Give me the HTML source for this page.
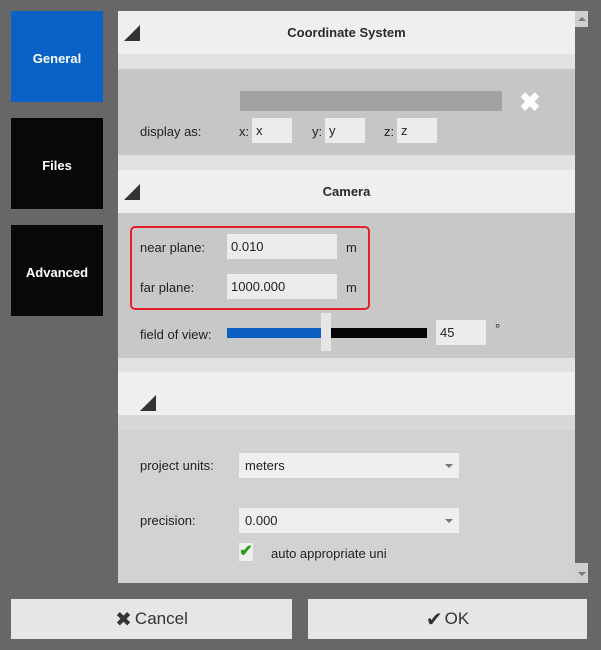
<!DOCTYPE html>
<html><head><meta charset="utf-8"><style>
*{margin:0;padding:0;box-sizing:border-box}
body{width:601px;height:650px;background:#676767;font-family:"Liberation Sans",sans-serif;position:relative;overflow:hidden;font-size:13px;color:#222}
.a{position:absolute}
.tab{position:absolute;left:11px;width:92px;height:91px;color:#fff;font-weight:bold;font-size:13px;display:flex;align-items:center;justify-content:center;background:#080808;padding-top:4px}
.hdr{position:absolute;left:118px;width:457px;height:43px;background:#efefef;font-weight:bold;font-size:13px;text-align:center;line-height:43px;color:#2a2a2a}
.tri{position:absolute;left:6px;top:14px;width:0;height:0;border-left:16px solid transparent;border-bottom:16px solid #333}
.strip{position:absolute;left:118px;width:457px;height:15px;background:#e2e2e2}
.body{position:absolute;left:118px;width:457px;background:#c6c6c6}
.in{position:absolute;background:#ececec;height:25px;line-height:25px;padding-left:4px;font-size:13px;color:#222}
.lbl{position:absolute;font-size:13px;color:#222}
.dd{position:absolute;background:#efefef;height:25px;line-height:26px;padding-left:6px;width:220px}
.dd:after{content:"";position:absolute;right:6px;top:11px;border-left:4px solid transparent;border-right:4px solid transparent;border-top:4px solid #777}
.btn{position:absolute;top:599px;height:40px;background:#e6e6e6;font-size:17px;color:#333;display:flex;align-items:center;justify-content:center}
</style></head><body>
<div class="tab" style="top:11px;background:#0a62c6">General</div>
<div class="tab" style="top:118px">Files</div>
<div class="tab" style="top:225px">Advanced</div>

<div class="a" style="left:575px;top:11px;width:13px;height:16px;background:#cfcfcf"></div>
<div class="a" style="left:578px;top:17px;border-left:4px solid transparent;border-right:4px solid transparent;border-bottom:4px solid #777"></div>
<div class="a" style="left:575px;top:563px;width:13px;height:20px;background:#cfcfcf"></div>
<div class="a" style="left:578px;top:572px;border-left:4px solid transparent;border-right:4px solid transparent;border-top:4px solid #777"></div>

<div class="hdr" style="top:11px"><div class="tri"></div>Coordinate System</div>
<div class="strip" style="top:54px"></div>
<div class="body" style="top:69px;height:86px"></div>
<div class="a" style="left:240px;top:91px;width:262px;height:20px;background:#a2a2a2"></div>
<div class="a" style="left:519px;top:90px;font-size:26px;color:#fff;font-weight:bold;line-height:24px">✖</div>
<div class="lbl" style="left:140px;top:124px">display as:</div>
<div class="lbl" style="left:239px;top:124px">x:</div><div class="in" style="left:252px;top:118px;width:40px">x</div>
<div class="lbl" style="left:312px;top:124px">y:</div><div class="in" style="left:325px;top:118px;width:40px">y</div>
<div class="lbl" style="left:384px;top:124px">z:</div><div class="in" style="left:397px;top:118px;width:40px">z</div>
<div class="strip" style="top:155px"></div>

<div class="hdr" style="top:170px"><div class="tri"></div>Camera</div>
<div class="body" style="top:213px;height:145px;background:#c8c8c8"></div>
<div class="a" style="left:130px;top:226px;width:240px;height:84px;border:2px solid #e8202a;border-radius:5px"></div>
<div class="lbl" style="left:140px;top:240px">near plane:</div><div class="in" style="left:227px;top:234px;width:110px">0.010</div><div class="lbl" style="left:346px;top:240px">m</div>
<div class="lbl" style="left:140px;top:280px">far plane:</div><div class="in" style="left:227px;top:274px;width:110px">1000.000</div><div class="lbl" style="left:346px;top:280px">m</div>
<div class="lbl" style="left:140px;top:327px">field of view:</div>
<div class="a" style="left:227px;top:328px;width:94px;height:10px;background:#0a5fc0"></div>
<div class="a" style="left:331px;top:328px;width:96px;height:10px;background:#050505"></div>
<div class="a" style="left:321px;top:313px;width:10px;height:38px;background:#e6e6e6"></div>
<div class="in" style="left:436px;top:320px;width:50px">45</div>
<div class="lbl" style="left:495px;top:321px">°</div>
<div class="strip" style="top:358px"></div>

<div class="hdr" style="top:372px"><div class="tri" style="left:22px;top:23px"></div></div>
<div class="strip" style="top:415px;background:#d8d8d8"></div>
<div class="body" style="top:430px;height:153px;background:#d2d2d2"></div>
<div class="lbl" style="left:140px;top:458px">project units:</div>
<div class="dd" style="left:239px;top:453px">meters</div>
<div class="lbl" style="left:140px;top:513px">precision:</div>
<div class="dd" style="left:239px;top:508px">0.000</div>
<div class="a" style="left:239px;top:543px;width:14px;height:18px;background:#efefef;color:#2a9a1a;font-size:16px;font-weight:bold;text-align:center;line-height:18px">✔</div>
<div class="lbl" style="left:271px;top:546px">auto appropriate uni</div>

<div class="btn" style="left:11px;width:281px"><span style="font-size:20px;margin-right:3px;color:#333">✖</span>Cancel</div>
<div class="btn" style="left:308px;width:279px"><span style="font-size:20px;margin-right:2px;color:#333">✔</span>OK</div>
</body></html>
